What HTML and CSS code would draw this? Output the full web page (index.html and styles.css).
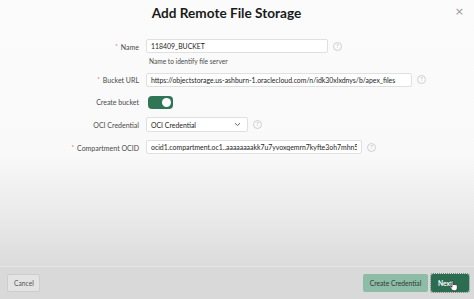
FILE: index.html
```html
<!DOCTYPE html>
<html>
    <head>
        <title>Add Remote File Storage</title>
        <meta charset="UTF-8">
        <link rel="stylesheet" href="styles.css">
    </head>
    <body>
        <div id="dialog">
            <div class="dlg-head">
                <h1 class="dlg-title">Add Remote File Storage</h1>
                <span class="dlg-close">&times;</span>
            </div>
            <div class="dlg-body">
                <form class="form" onsubmit="return false;">
                    <div class="row">
                        <label class="lbl"><span class="req">*</span>Name</label>
                        <div class="field">
                            <input type="text" class="txt w-name" value="118409_BUCKET">
                            <span class="help">?</span>
                        </div>
                    </div>
                    <div class="hint">Name to identify file server</div>
                    <div class="row">
                        <label class="lbl"><span class="req">*</span>Bucket URL</label>
                        <div class="field">
                            <input type="text" class="txt w-url" value="https://objectstorage.us-ashburn-1.oraclecloud.com/n/idk30xlxdnys/b/apex_files">
                            <span class="help">?</span>
                        </div>
                    </div>
                    <div class="row">
                        <label class="lbl">Create bucket</label>
                        <div class="field">
                            <span class="toggle"><span class="knob"></span></span>
                        </div>
                    </div>
                    <div class="row">
                        <label class="lbl">OCI Credential</label>
                        <div class="field">
                            <div class="select w-sel">
                                <span>OCI Credential</span>
                                <svg class="chev" width="7" height="5" viewBox="0 0 7 5"><path d="M1 1.2 L3.5 3.6 L6 1.2" fill="none" stroke="#666" stroke-width="1"/></svg>
                            </div>
                            <span class="help">?</span>
                        </div>
                    </div>
                    <div class="row">
                        <label class="lbl"><span class="req">*</span>Compartment OCID</label>
                        <div class="field">
                            <input type="text" class="txt w-ocid" value="ocid1.compartment.oc1..aaaaaaaakk7u7yvoxqemrn7kyfte3oh7mhn5h2ezqh3">
                            <span class="help">?</span>
                        </div>
                    </div>
                </form>
            </div>
            <div class="dlg-foot">
                <button class="btn btn-cancel">Cancel</button>
                <div class="foot-right">
                    <button class="btn btn-cred">Create Credential</button>
                    <button class="btn btn-next">Next</button>
                </div>
                <svg class="cursor" width="10" height="12" viewBox="0 0 10 12">
                    <path d="M3 1.2 C3 0.5 4.2 0.5 4.2 1.2 L4.2 5 L4.5 4.4 C4.8 4 5.6 4.2 5.6 4.8 L5.8 4.6 C6.2 4.3 6.9 4.5 6.9 5.1 L7.2 4.9 C7.6 4.7 8.3 4.9 8.3 5.5 L8.3 8 C8.3 9.6 7.3 10.8 5.8 10.8 L4.8 10.8 C3.9 10.8 3.3 10.3 2.8 9.6 L1.1 7.2 C0.7 6.6 1.4 5.9 2 6.4 L3 7.3 Z" fill="#fff" stroke="#222" stroke-width="0.7"/>
                </svg>
            </div>
        </div>
    </body>
</html>
```

FILE: styles.css
```css
html, body {
    margin: 0;
    padding: 0;
    width: 474px;
    height: 299px;
    overflow: hidden;
    font-family: "Lato", "Open Sans", sans-serif;
    color: #333;
}
#dialog {
    height: 299px;
    display: flex;
    flex-direction: column;
    background: linear-gradient(to bottom, #fbfbfb 0px, #f9f9f9 155px, #eaeaea 215px, #dbdbdb 266px);
    position: relative;
}
.dlg-head {
    height: 30px;
    display: flex;
    align-items: center;
    justify-content: center;
}
.dlg-title {
    margin: 0;
    margin-top: -4px;
    padding-right: 21px;
    font-size: 13.6px;
    font-weight: 700;
    color: #1a1a1a;
}
.dlg-close {
    position: absolute;
    right: 10px;
    top: 5px;
    font-size: 11px;
    font-family: "DejaVu Sans", sans-serif;
    color: #999;
}
.dlg-body {
    flex: 1;
    padding-top: 5px;
}
.form {
    margin: 0;
}
.row {
    display: grid;
    grid-template-columns: 139px 1fr;
    column-gap: 7px;
    align-items: center;
    height: 22px;
    margin-bottom: 0.5px;
}
.lbl {
    text-align: right;
    font-size: 7px;
    color: #4a4a4a;
}
.req {
    color: #b8483a;
    font-size: 6px;
    vertical-align: 2px;
    margin-right: 3px;
}
.field {
    display: flex;
    align-items: center;
}
.txt {
    box-sizing: border-box;
    height: 14px;
    margin: 0;
    padding: 0 4px;
    border: 1px solid #e0e0e0;
    border-radius: 2px;
    background: #fff;
    font-family: "Lato", "Open Sans", sans-serif;
    font-size: 6.9px;
    color: #1e1e1e;
    outline: none;
}
.w-name { width: 182px; }
.w-url { width: 266px; }
.w-ocid { width: 216px; }
.hint {
    margin: -1px 0 3px 149px;
    height: 9px;
    line-height: 9px;
    font-size: 6.6px;
    color: #4a4a4a;
}
.help {
    box-sizing: border-box;
    width: 9px;
    height: 9px;
    margin-left: 5px;
    border: 1px solid #cfcfcf;
    border-radius: 50%;
    font-size: 5.5px;
    line-height: 7px;
    text-align: center;
    color: #bbb;
}
.toggle {
    box-sizing: border-box;
    margin-left: 2px;
    width: 25px;
    height: 13px;
    border-radius: 4px;
    background: #2f7556;
    display: flex;
    align-items: center;
    justify-content: flex-end;
    padding-right: 2px;
}
.knob {
    width: 9px;
    height: 9px;
    border-radius: 50%;
    background: #fff;
}
.select {
    box-sizing: border-box;
    height: 15px;
    padding: 0 6px 0 4px;
    border: 1px solid #e0e0e0;
    border-radius: 2px;
    background: #fff;
    display: flex;
    align-items: center;
    justify-content: space-between;
    font-size: 6.9px;
    color: #1e1e1e;
}
.w-sel { width: 102px; }
.dlg-foot {
    height: 33px;
    box-sizing: border-box;
    border-top: 1px solid #e6e6e6;
    background: #d9d9d9;
    display: flex;
    align-items: flex-start;
    justify-content: space-between;
    padding: 7px 5px 0 7px;
    position: relative;
}
.foot-right {
    display: flex;
    gap: 3px;
}
.btn {
    height: 18px;
    margin: 0;
    padding: 0 6px;
    border: 1px solid transparent;
    border-radius: 2px;
    font-family: "Lato", "Open Sans", sans-serif;
    font-size: 6.7px;
    cursor: pointer;
}
.btn-cancel {
    width: 33px;
    background: #e3e3e3;
    border-color: #cdcdcd;
    color: #555;
}
.btn-cred {
    width: 65px;
    background: #8dbca7;
    color: #2c3b34;
    padding: 0;
}
.btn-next {
    width: 38px;
    background: #2c6c51;
    color: #fff;
    font-weight: 700;
    outline: 1px dotted #6a8a7c;
    outline-offset: 0;
    text-align: left;
}
.cursor {
    position: absolute;
    left: 449px;
    top: 13px;
}
```
